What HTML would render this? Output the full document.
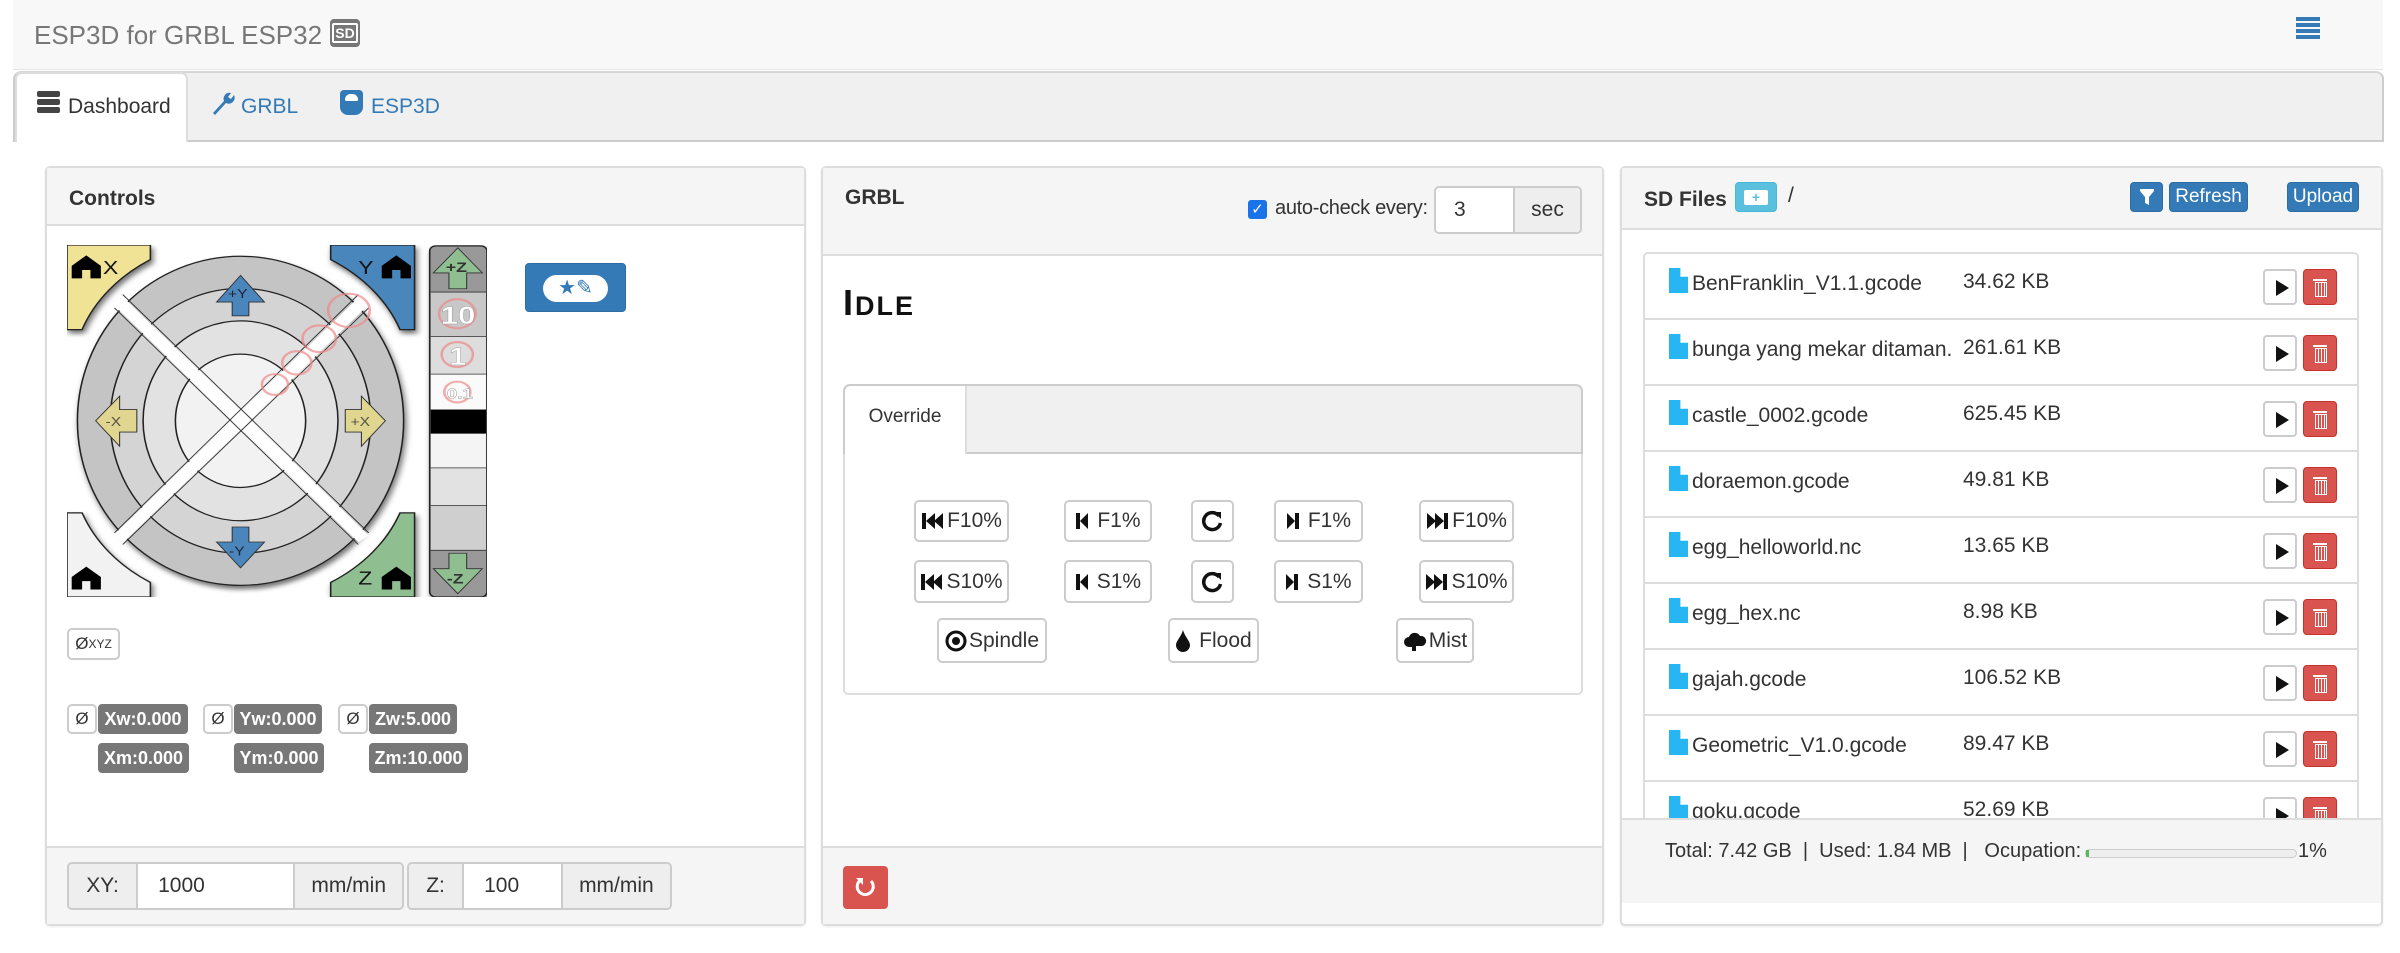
<!DOCTYPE html>
<html><head><meta charset="utf-8">
<style>
*{box-sizing:border-box;margin:0;padding:0}
body{width:2400px;height:953px;background:#fff;font-family:"Liberation Sans",Arial,sans-serif;color:#333;position:relative;overflow:hidden;font-size:21px}
.a{position:absolute}
.hdr{left:13px;top:0;width:2370px;height:70px;background:#f8f8f8;border-bottom:1px solid #e4e4e4}
.tabs{left:13px;top:71px;width:2371px;height:71px;background:#f0f0f0;border:2px solid #ccc;border-top-color:#d6d6d6;border-radius:8px 8px 0 0}
.panel{border:2px solid #ddd;border-radius:5px;background:#fff;box-shadow:0 1px 2px rgba(0,0,0,.08)}
.ph{background:#f5f5f5;border-bottom:2px solid #ddd;font-weight:bold;font-size:21px;color:#333}
.btn{position:absolute;border:2px solid #ccc;border-radius:5px;background:#fff;display:flex;align-items:center;justify-content:center;font-size:21px;color:#333}
.btn svg{margin-right:2px}
.lab{position:absolute;background:#777;color:#fff;font-weight:bold;font-size:18px;border-radius:4px;display:flex;align-items:center;justify-content:center;height:30px}
.bb{position:absolute;background:#337ab7;border:1px solid #2e6da4;color:#fff;border-radius:4px;display:flex;align-items:center;justify-content:center;font-size:19px}
.row{position:absolute;left:0;width:100%;height:66px;border-bottom:2px solid #ddd}
.fn{position:absolute;left:47px;top:18px;font-size:21px}
.fs{position:absolute;left:318px;top:16px;font-size:21px}
.fi{position:absolute;left:24px;top:14px;width:19px;height:25px;background:#27b6f1;clip-path:polygon(0 0,60% 0,60% 35%,100% 35%,100% 100%,0 100%)}
.pl{position:absolute;left:618px;top:15px;width:34px;height:36px;border:2px solid #ccc;border-radius:4px;background:#fff}
.pl:after{content:"";position:absolute;left:11px;top:9px;border-left:13px solid #111;border-top:8px solid transparent;border-bottom:8px solid transparent}
.tr{position:absolute;left:658px;top:15px;width:34px;height:36px;border:1px solid #c9302c;border-radius:4px;background:#d9534f}
.tr:before{content:"";position:absolute;left:9px;top:9px;width:14px;height:2px;background:#fff}
.tr:after{content:"";position:absolute;left:11px;top:12px;width:10px;height:13px;border:1px solid #fff;background:repeating-linear-gradient(90deg,transparent 0 2px,#fff 2px 3px)}
.grp{position:absolute;border:2px solid #ccc;border-radius:5px;display:flex;overflow:hidden;height:48px}
.grp div{display:flex;align-items:center;font-size:21px}
.ad{background:#eee;justify-content:center}
.in{background:#fff;border-left:2px solid #ccc;border-right:2px solid #ccc;padding-left:20px}
</style></head><body>

<div class="a hdr"></div>
<div class="a" style="left:34px;top:20px;font-size:26px;color:#777">ESP3D for GRBL ESP32</div>
<div class="a" style="left:330px;top:19px;width:30px;height:28px;background:#777;border-radius:4px;color:#fff;font-size:17px;font-weight:bold;text-align:center;line-height:28px"><span style="border:2px solid #fff;border-radius:2px;padding:0 1px;font-size:14px">SD</span></div>
<div class="a" style="left:2296px;top:17px;width:24px">
<div style="height:4px;background:#337ab7;margin-bottom:2px"></div><div style="height:4px;background:#337ab7;margin-bottom:2px"></div><div style="height:4px;background:#337ab7;margin-bottom:2px"></div><div style="height:4px;background:#337ab7"></div></div>

<div class="a tabs"></div>
<div class="a" style="left:15px;top:72px;width:173px;height:70px;background:#fff;border:2px solid #ddd;border-bottom:none;border-radius:7px 7px 0 0"></div>
<div class="a" style="left:37px;top:91px;width:23px">
<div style="height:6px;background:#444;border-radius:2px;margin-bottom:2px"></div><div style="height:6px;background:#444;border-radius:2px;margin-bottom:2px"></div><div style="height:6px;background:#444;border-radius:2px"></div></div>
<div class="a" style="left:68px;top:95px;font-size:21px;color:#333">Dashboard</div>
<svg class="a" style="left:210px;top:90px" width="26" height="26" viewBox="0 0 26 26"><path d="M3 23 L14 11 A6 6 0 0 1 21 3 L18 7 L21 9 L24 5 A6 6 0 0 1 16 13 L5 25 Z" fill="#337ab7"/></svg>
<div class="a" style="left:241px;top:95px;font-size:21px;color:#337ab7">GRBL</div>
<div class="a" style="left:340px;top:90px;width:23px;height:25px;background:#337ab7;border-radius:4px 4px 8px 8px"><div style="position:absolute;left:5px;top:4px;width:13px;height:7px;background:#fff;border-radius:7px 7px 2px 2px"></div></div>
<div class="a" style="left:371px;top:95px;font-size:21px;color:#337ab7">ESP3D</div>

<!-- Controls panel -->
<div class="a panel" style="left:45px;top:166px;width:761px;height:760px">
 <div class="ph" style="height:58px;padding:19px 22px">Controls</div>
 <div class="a" style="left:0;bottom:0;width:757px;height:78px;background:#f5f5f5;border-top:2px solid #ddd"></div>
</div>
<svg class="a" style="left:67px;top:245px" width="420" height="352" viewBox="131 605 806 845" preserveAspectRatio="none">
<defs><filter id="sh" x="-20%" y="-20%" width="140%" height="140%"><feDropShadow dx="4" dy="8" stdDeviation="6" flood-opacity=".55"/></filter></defs>
<g filter="url(#sh)" stroke="#222" stroke-width="3">
<path d="M131 605 H291 V640 A330 330 0 0 0 160 808 H131 Z" fill="#f0e396"/>
<path d="M637 605 H798 V808 H770 A330 330 0 0 0 637 640 Z" fill="#4a86bc"/>
<path d="M131 1248 H160 A330 330 0 0 0 291 1415 V1450 H131 Z" fill="#f2f2f2"/>
<path d="M770 1248 H798 V1450 H637 V1415 A330 330 0 0 0 770 1248 Z" fill="#8fbe91"/>
<ellipse cx="464" cy="1027" rx="313" ry="395" fill="#c4c4c4"/>
<ellipse cx="464" cy="1027" rx="250" ry="318" fill="#d4d4d4"/>
<ellipse cx="464" cy="1027" rx="187" ry="240" fill="#e2e2e2"/>
<ellipse cx="464" cy="1027" rx="125" ry="160" fill="#f2f2f2"/>
</g>
<g stroke="#fff" stroke-width="26"><line x1="230" y1="740" x2="700" y2="1310"/><line x1="700" y1="740" x2="230" y2="1310"/></g>
<g stroke="#333" stroke-width="2" fill="none"><line x1="222" y1="756" x2="690" y2="1324"/><line x1="238" y1="724" x2="710" y2="1296"/><line x1="690" y1="724" x2="222" y2="1296"/><line x1="710" y1="756" x2="238" y2="1324"/></g>
<g stroke="#333" stroke-width="2">
<path d="M464 678 L510 742 H480 V775 H448 V742 H418 Z" fill="#4a86bc"/>
<path d="M464 1380 L510 1318 H480 V1282 H448 V1318 H418 Z" fill="#4a86bc"/>
<path d="M186 1027 L232 968 V1000 H265 V1054 H232 V1088 Z" fill="#e0d690"/>
<path d="M742 1027 L696 968 V1000 H665 V1054 H696 V1088 Z" fill="#e0d690"/>
</g>
<g font-family="Liberation Sans" font-size="44" fill="#111">
<text x="200" y="675">X</text><text x="690" y="675">Y</text><text x="690" y="1420">Z</text>
<text x="440" y="732" font-size="30" fill="#223">+Y</text><text x="442" y="1350" font-size="30" fill="#223">-Y</text>
<text x="205" y="1040" font-size="30" fill="#554">-X</text><text x="675" y="1040" font-size="30" fill="#554">+X</text>
</g>
<g fill="#000"><path d="M140 685 V655 L168 630 L196 655 V685 H176 V665 H160 V685 Z"/><path d="M735 685 V655 L763 630 L791 655 V685 H771 V665 H755 V685 Z"/><path d="M140 1432 V1402 L168 1377 L196 1402 V1432 H176 V1412 H160 V1432 Z"/><path d="M735 1432 V1402 L763 1377 L791 1402 V1432 H771 V1412 H755 V1432 Z"/></g>
<g filter="url(#sh)"><rect x="827" y="607" width="110" height="843" rx="12" fill="#999" stroke="#222" stroke-width="3"/></g>
<rect x="829" y="718" width="106" height="107" fill="#c8c8c8"/>
<rect x="829" y="825" width="106" height="90" fill="#ddd"/>
<rect x="829" y="915" width="106" height="85" fill="#fafafa"/>
<rect x="829" y="1000" width="106" height="58" fill="#000"/>
<rect x="829" y="1058" width="106" height="82" fill="#f4f4f4"/>
<rect x="829" y="1140" width="106" height="90" fill="#e2e2e2"/>
<rect x="829" y="1230" width="106" height="108" fill="#cfcfcf"/>
<g stroke="#333" stroke-width="2"><line x1="829" y1="718" x2="935" y2="718"/><line x1="829" y1="825" x2="935" y2="825"/><line x1="829" y1="915" x2="935" y2="915"/><line x1="829" y1="1140" x2="935" y2="1140"/><line x1="829" y1="1230" x2="935" y2="1230"/><line x1="829" y1="1338" x2="935" y2="1338"/></g>
<path d="M881 612 L928 672 H898 V710 H864 V672 H834 Z" fill="#8fbe91" stroke="#333" stroke-width="2"/>
<path d="M881 1442 L928 1382 H898 V1345 H864 V1382 H834 Z" fill="#8fbe91" stroke="#333" stroke-width="2"/>
<g fill="none" stroke="#e88" stroke-width="5" opacity=".7"><circle cx="880" cy="770" r="35"/><circle cx="880" cy="868" r="30"/><circle cx="880" cy="958" r="25"/><circle cx="672" cy="762" r="40"/><circle cx="615" cy="830" r="32"/><circle cx="572" cy="888" r="28"/><circle cx="530" cy="940" r="25"/></g>
<g font-family="Liberation Sans" font-weight="bold" fill="#fff" stroke="#999" stroke-width="1"><text x="848" y="795" font-size="60">10</text><text x="864" y="893" font-size="60">1</text><text x="860" y="973" font-size="36">0.1</text><text x="858" y="670" font-size="34" fill="#333" stroke="none">+Z</text><text x="860" y="1418" font-size="34" fill="#333" stroke="none">-Z</text></g>
</svg>
<div class="a" style="left:525px;top:263px;width:101px;height:49px;background:#337ab7;border:1px solid #2e6da4;border-radius:4px"><div style="position:absolute;left:17px;top:11px;width:65px;height:27px;background:#fff;border-radius:14px;color:#337ab7;font-size:20px;text-align:center;line-height:27px">★✎</div></div>

<div class="btn" style="left:67px;top:628px;width:53px;height:32px;font-size:17px">Ø<span style="font-size:12px">XYZ</span></div>
<div class="btn" style="left:67px;top:704px;width:30px;height:30px;font-size:17px">Ø</div>
<div class="lab" style="left:98px;top:704px;width:90px">Xw:0.000</div>
<div class="lab" style="left:98px;top:743px;width:91px">Xm:0.000</div>
<div class="btn" style="left:203px;top:704px;width:30px;height:30px;font-size:17px">Ø</div>
<div class="lab" style="left:234px;top:704px;width:88px">Yw:0.000</div>
<div class="lab" style="left:234px;top:743px;width:90px">Ym:0.000</div>
<div class="btn" style="left:338px;top:704px;width:30px;height:30px;font-size:17px">Ø</div>
<div class="lab" style="left:369px;top:704px;width:88px">Zw:5.000</div>
<div class="lab" style="left:369px;top:743px;width:99px">Zm:10.000</div>

<div class="grp" style="left:67px;top:862px;width:337px"><div class="ad" style="width:68px">XY:</div><div class="in" style="width:161px">1000</div><div class="ad" style="width:108px">mm/min</div></div>
<div class="grp" style="left:407px;top:862px;width:265px"><div class="ad" style="width:54px">Z:</div><div class="in" style="width:102px">100</div><div class="ad" style="width:109px">mm/min</div></div>

<!-- GRBL panel -->
<div class="a panel" style="left:821px;top:166px;width:783px;height:760px">
 <div class="ph" style="height:88px;padding:18px 22px">GRBL</div>
 <div class="a" style="left:0;bottom:0;width:779px;height:78px;background:#f5f5f5;border-top:2px solid #ddd"></div>
</div>
<div class="a" style="left:1248px;top:200px;width:19px;height:19px;background:#1a73e8;border-radius:3px;color:#fff;font-size:15px;text-align:center;line-height:19px">✓</div>
<div class="a" style="left:1275px;top:197px;font-size:20px;letter-spacing:-0.3px">auto-check every:</div>
<div class="grp" style="left:1434px;top:186px;width:148px;height:48px"><div style="width:80px;background:#fff;border-right:2px solid #ccc;padding-left:18px">3</div><div class="ad" style="width:66px">sec</div></div>
<div class="a" style="left:843px;top:282px;font-size:36px;font-weight:bold;color:#111;letter-spacing:2px">I<span style="font-size:27px">DLE</span></div>
<div class="a" style="left:843px;top:384px;width:740px;height:70px;background:#f0f0f0;border:2px solid #ccc;border-radius:7px 7px 0 0"></div>
<div class="a" style="left:845px;top:386px;width:122px;height:68px;background:#fff;border-right:2px solid #ddd;border-radius:6px 0 0 0;font-size:19px;text-align:center;line-height:62px">Override</div>
<div class="a" style="left:843px;top:454px;width:740px;height:241px;border:2px solid #ddd;border-top:none;border-radius:0 0 5px 5px"></div>

<div class="btn" style="left:914px;top:500px;width:95px;height:42px"><svg width="24" height="20" viewBox="0 0 24 20"><path d="M1 2h4v16H1zM5 10l9-8v16zM13 10l9-8v16z" fill="#111"/></svg>F10%</div>
<div class="btn" style="left:1064px;top:500px;width:88px;height:42px"><svg width="14" height="20" viewBox="0 0 14 20"><path d="M1 2h4v16H1zM5 10l8-8v16z" fill="#111"/></svg>&nbsp;F1%</div>
<div class="btn" style="left:1191px;top:500px;width:43px;height:42px"><svg width="22" height="22" viewBox="0 0 22 22"><path d="M18 6A8.5 8.5 0 1 0 19.5 13" fill="none" stroke="#111" stroke-width="3.5"/><path d="M13 2l7 0 0 7z" fill="#111"/></svg></div>
<div class="btn" style="left:1274px;top:500px;width:89px;height:42px"><svg width="14" height="20" viewBox="0 0 14 20"><path d="M1 2l8 8-8 8zM9 2h4v16H9z" fill="#111"/></svg>&nbsp;F1%</div>
<div class="btn" style="left:1419px;top:500px;width:95px;height:42px"><svg width="24" height="20" viewBox="0 0 24 20"><path d="M1 2l9 8-9 8zM9 2l9 8-9 8zM18 2h4v16h-4z" fill="#111"/></svg>F10%</div>

<div class="btn" style="left:914px;top:560px;width:95px;height:43px"><svg width="24" height="20" viewBox="0 0 24 20"><path d="M1 2h4v16H1zM5 10l9-8v16zM13 10l9-8v16z" fill="#111"/></svg>S10%</div>
<div class="btn" style="left:1064px;top:560px;width:88px;height:43px"><svg width="14" height="20" viewBox="0 0 14 20"><path d="M1 2h4v16H1zM5 10l8-8v16z" fill="#111"/></svg>&nbsp;S1%</div>
<div class="btn" style="left:1191px;top:560px;width:43px;height:43px"><svg width="22" height="22" viewBox="0 0 22 22"><path d="M18 6A8.5 8.5 0 1 0 19.5 13" fill="none" stroke="#111" stroke-width="3.5"/><path d="M13 2l7 0 0 7z" fill="#111"/></svg></div>
<div class="btn" style="left:1274px;top:560px;width:89px;height:43px"><svg width="14" height="20" viewBox="0 0 14 20"><path d="M1 2l8 8-8 8zM9 2h4v16H9z" fill="#111"/></svg>&nbsp;S1%</div>
<div class="btn" style="left:1419px;top:560px;width:95px;height:43px"><svg width="24" height="20" viewBox="0 0 24 20"><path d="M1 2l9 8-9 8zM9 2l9 8-9 8zM18 2h4v16h-4z" fill="#111"/></svg>S10%</div>

<div class="btn" style="left:937px;top:618px;width:110px;height:45px"><svg width="22" height="22" viewBox="0 0 22 22"><circle cx="11" cy="11" r="9" fill="none" stroke="#111" stroke-width="3"/><circle cx="11" cy="11" r="4" fill="#111"/></svg>Spindle</div>
<div class="btn" style="left:1168px;top:618px;width:91px;height:45px"><svg width="16" height="24" viewBox="0 0 16 24"><path d="M8 1C6 8 1 12 1 16a7 7 0 0 0 14 0C15 12 10 8 8 1z" fill="#111"/></svg>&nbsp;Flood</div>
<div class="btn" style="left:1396px;top:618px;width:78px;height:45px"><svg width="24" height="24" viewBox="0 0 24 24"><path d="M6 18a5 5 0 0 1 0-10a6 6 0 0 1 11-1a5 5 0 0 1 2 10H13v5H9v-4z" fill="#111"/></svg>Mist</div>
<div class="a" style="left:843px;top:866px;width:45px;height:43px;background:#d9534f;border-radius:4px"><svg style="position:absolute;left:11px;top:10px" width="22" height="22" viewBox="0 0 22 22"><path d="M6 4.5A8 8 0 1 0 17 5" fill="none" stroke="#fff" stroke-width="3"/><path d="M2 2h7v7z" fill="#fff"/></svg></div>

<!-- SD panel -->
<div class="a panel" style="left:1620px;top:166px;width:763px;height:760px">
 <div class="ph" style="height:62px;padding:20px 22px">SD Files</div>
 <div class="a" style="left:0;top:650px;width:759px;height:85px;background:#f5f5f5;border-top:2px solid #ddd"></div>
</div>
<div class="a" style="left:1735px;top:182px;width:42px;height:30px;background:#5bc0de;border:1px solid #46b8da;border-radius:4px"><div style="position:absolute;left:8px;top:7px;width:24px;height:15px;background:#fff;border-radius:2px;color:#5bc0de;font-size:14px;text-align:center;line-height:15px;font-weight:bold">+</div></div>
<div class="a" style="left:1788px;top:184px;font-size:21px">/</div>
<div class="bb" style="left:2130px;top:182px;width:33px;height:30px"><svg width="14" height="16" viewBox="0 0 14 16"><path d="M0 0h14v2L9 8v8l-4-2V8L0 2z" fill="#fff"/></svg></div>
<div class="bb" style="left:2169px;top:182px;width:79px;height:30px">Refresh</div>
<div class="bb" style="left:2287px;top:182px;width:72px;height:30px">Upload</div>

<div class="a" style="left:1643px;top:252px;width:716px;height:566px;overflow:hidden;border:2px solid #ddd;border-bottom:none;border-radius:5px 5px 0 0">
 <div class="row" style="top:0"><div class="fi"></div><div class="fn">BenFranklin_V1.1.gcode</div><div class="fs">34.62 KB</div><div class="pl"></div><div class="tr"></div></div>
 <div class="row" style="top:66px"><div class="fi"></div><div class="fn">bunga yang mekar ditaman.</div><div class="fs">261.61 KB</div><div class="pl"></div><div class="tr"></div></div>
 <div class="row" style="top:132px"><div class="fi"></div><div class="fn">castle_0002.gcode</div><div class="fs">625.45 KB</div><div class="pl"></div><div class="tr"></div></div>
 <div class="row" style="top:198px"><div class="fi"></div><div class="fn">doraemon.gcode</div><div class="fs">49.81 KB</div><div class="pl"></div><div class="tr"></div></div>
 <div class="row" style="top:264px"><div class="fi"></div><div class="fn">egg_helloworld.nc</div><div class="fs">13.65 KB</div><div class="pl"></div><div class="tr"></div></div>
 <div class="row" style="top:330px"><div class="fi"></div><div class="fn">egg_hex.nc</div><div class="fs">8.98 KB</div><div class="pl"></div><div class="tr"></div></div>
 <div class="row" style="top:396px"><div class="fi"></div><div class="fn">gajah.gcode</div><div class="fs">106.52 KB</div><div class="pl"></div><div class="tr"></div></div>
 <div class="row" style="top:462px"><div class="fi"></div><div class="fn">Geometric_V1.0.gcode</div><div class="fs">89.47 KB</div><div class="pl"></div><div class="tr"></div></div>
 <div class="row" style="top:528px"><div class="fi"></div><div class="fn">goku.gcode</div><div class="fs">52.69 KB</div><div class="pl"></div><div class="tr"></div></div>
</div>
<div class="a" style="left:1665px;top:840px;font-size:20px;white-space:pre">Total: 7.42 GB  |  Used: 1.84 MB  |   Ocupation:</div>
<div class="a" style="left:2085px;top:849px;width:212px;height:9px;border:1px solid #ccc;border-radius:5px;background:#eee"><div style="width:3px;height:7px;background:#5cb85c"></div></div>
<div class="a" style="left:2298px;top:840px;font-size:20px">1%</div>
</body></html>
